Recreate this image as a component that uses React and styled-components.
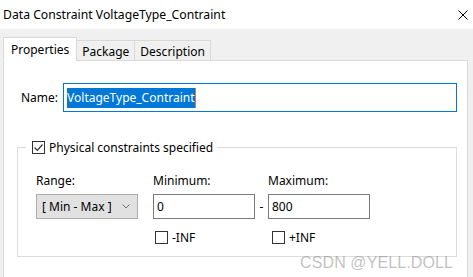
import React from 'react';
import styled, { createGlobalStyle } from 'styled-components';

const Global = createGlobalStyle`
  html, body { margin: 0; padding: 0; background: #f0f0f0; }
  body { font-family: "Noto Sans", "Open Sans", sans-serif; font-size: 12px; color: #000; }
`

const Window = styled.div`
  position: relative;
  width: 473px;
  height: 277px;
  overflow: hidden;
  display: flex;
  flex-direction: column;
  background: #f0f0f0;
`

const TitleBar = styled.div`
  height: 29px;
  flex: none;
  background: #fff;
  display: flex;
  align-items: center;
  justify-content: space-between;
  padding: 0 5px 0 3px;
  font-size: 12.2px;
`

const Body = styled.div`
  flex: 1;
  display: flex;
  flex-direction: column;
  padding: 8px 5px 0 3px;
`

const TabStrip = styled.div`
  display: flex;
  align-items: flex-end;
  height: 24px;
  margin-bottom: -1px;
  position: relative;
  z-index: 1;
`

const Tab = styled.div`
  height: ${p => (p.$active ? '24px' : '21px')};
  padding: 0 ${p => (p.$active ? '7px' : '5px')};
  box-sizing: border-box;
  display: flex;
  align-items: center;
  background: ${p => (p.$active ? '#fff' : '#f0f0f0')};
  border: 1px solid #d9d9d9;
  border-bottom: ${p => (p.$active ? '1px solid #fff' : '1px solid #d9d9d9')};
  margin-left: ${p => (p.$first ? '0' : '-1px')};
  padding-top: ${p => (p.$active ? '0' : '2px')};
`

const Panel = styled.div`
  flex: 1;
  background: #fff;
  border: 1px solid #d9d9d9;
  border-bottom: none;
  padding: 22px 10px 0 13px;
  display: flex;
  flex-direction: column;
`

const NameRow = styled.div`
  display: flex;
  align-items: center;
  gap: 5px;
  padding-left: 4px;
`

const NameInput = styled.div`
  flex: 1;
  height: 29px;
  box-sizing: border-box;
  border: 1px solid #0078d7;
  display: flex;
  align-items: center;
  padding-left: 3px;
`

const Selected = styled.span`
  background: #0078d7;
  color: #fff;
  padding: 1px 0 2px;
  border-right: 1px solid #e07a2a;
`

const Group = styled.fieldset`
  margin: 27px 0 0 0;
  padding: 16px 0 0 18px;
  height: 118px;
  box-sizing: border-box;
  border: 1px solid #dcdcdc;
  display: flex;
  gap: 15px;
`

const Legend = styled.legend`
  padding: 0 4px 0 6px;
  margin-left: -10px;
  display: flex;
  align-items: center;
  gap: 4px;
`

const Column = styled.div`
  display: flex;
  flex-direction: column;
  gap: 5px;
  width: ${p => p.$w}px;
`

const FieldRow = styled.div`
  display: flex;
  align-items: center;
`

const Label = styled.div`
  height: 17px;
  width: ${p => (p.$w ? `${p.$w}px` : 'auto')};
`

const Combo = styled.div`
  height: 25px;
  box-sizing: border-box;
  background: #e1e1e1;
  border: 1px solid #adadad;
  display: flex;
  align-items: center;
  justify-content: space-between;
  padding: 0 7px 0 5px;
`

const TextBox = styled.div`
  width: 102px;
  height: 25px;
  box-sizing: border-box;
  border: 1px solid #7a7a7a;
  display: flex;
  align-items: center;
  padding-left: 3px;
`

const Dash = styled.span`
  width: 13px;
  text-align: center;
`

const Check = styled.label`
  display: flex;
  align-items: center;
  gap: 4px;
  margin-top: 5px;
  padding-left: 2px;
  width: ${p => (p.$w ? `${p.$w}px` : 'auto')};
`

const Box = styled.span`
  width: 13px;
  height: 13px;
  box-sizing: border-box;
  border: 1px solid #333;
  background: #fff;
  display: inline-flex;
  align-items: center;
  justify-content: center;
`

const Watermark = styled.div`
  position: absolute;
  right: 20px;
  bottom: 5px;
  font-family: "Liberation Sans", Arial, sans-serif;
  font-size: 16px;
  color: rgba(130, 130, 130, 0.5);
  letter-spacing: 0.1px;
`

const CloseIcon = () => (
  <svg width="10" height="10" viewBox="0 0 10 10">
    <path d="M0.5 0.5 L9.5 9.5 M9.5 0.5 L0.5 9.5" stroke="#000" strokeWidth="1" />
  </svg>
)

const Tick = () => (
  <svg width="11" height="11" viewBox="0 0 11 11">
    <path d="M1.5 5.5 L4.3 8.3 L9.5 2.5" stroke="#333" strokeWidth="1.2" fill="none" />
  </svg>
)

const Chevron = () => (
  <svg width="8" height="5" viewBox="0 0 8 5">
    <path d="M0.5 0.5 L4 4 L7.5 0.5" stroke="#666" strokeWidth="0.9" fill="none" />
  </svg>
)

export default function App() {
  return (
    <Window>
      <Global />
      <TitleBar>
        <span>Data Constraint VoltageType_Contraint</span>
        <CloseIcon />
      </TitleBar>
      <Body>
        <TabStrip>
          <Tab $active $first>Properties</Tab>
          <Tab>Package</Tab>
          <Tab>Description</Tab>
        </TabStrip>
        <Panel>
          <NameRow>
            <span>Name:</span>
            <NameInput>
              <Selected>VoltageType_Contraint</Selected>
            </NameInput>
          </NameRow>
          <Group>
            <Legend>
              <Box><Tick /></Box>
              Physical constraints specified
            </Legend>
            <Column $w={102}>
              <Label>Range:</Label>
              <Combo>
                <span>[ Min - Max ]</span>
                <Chevron />
              </Combo>
            </Column>
            <Column $w={220}>
              <FieldRow>
                <Label $w={115}>Minimum:</Label>
                <Label>Maximum:</Label>
              </FieldRow>
              <FieldRow>
                <TextBox>0</TextBox>
                <Dash>-</Dash>
                <TextBox>800</TextBox>
              </FieldRow>
              <FieldRow>
                <Check $w={115}><Box /> -INF</Check>
                <Check><Box /> +INF</Check>
              </FieldRow>
            </Column>
          </Group>
        </Panel>
      </Body>
      <Watermark>CSDN @YELL.DOLL</Watermark>
    </Window>
  );
}
